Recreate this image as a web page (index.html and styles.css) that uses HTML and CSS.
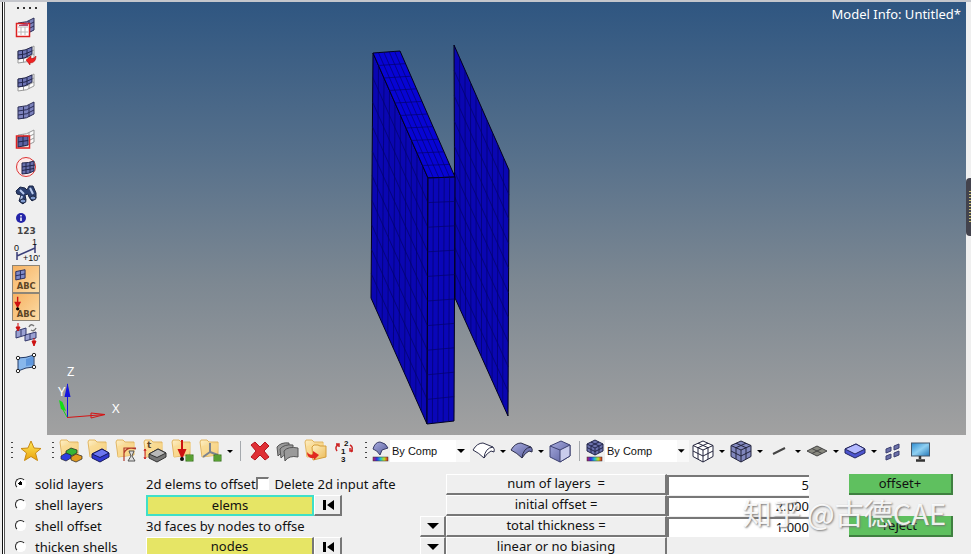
FILE: index.html
```
<!DOCTYPE html>
<html lang="en">
<head>
    <meta charset="UTF-8">
    <meta name="viewport" content="width=device-width, initial-scale=1.0">
    <title>Model Info: Untitled*</title>
    <link rel="stylesheet" href="styles.css">
</head>
<body>
    <!-- Shared icon parts -->
    <svg class="defs" aria-hidden="true">
        <defs>
            <linearGradient id="gold" x1="0" y1="0" x2="0" y2="1"><stop offset="0" stop-color="#ffe95a"/><stop offset="1" stop-color="#e9a20c"/></linearGradient>
            <linearGradient id="folderFill" x1="0" y1="0" x2="1" y2="1"><stop offset="0" stop-color="#fff0c4"/><stop offset="1" stop-color="#eab955"/></linearGradient>
            <linearGradient id="steel" x1="0" y1="0" x2="1" y2="1"><stop offset="0" stop-color="#a9addf"/><stop offset="1" stop-color="#555a9b"/></linearGradient>
            <linearGradient id="sky" x1="0" y1="0" x2="1" y2="1"><stop offset="0" stop-color="#2b8bd0"/><stop offset="0.5" stop-color="#8fd0f2"/><stop offset="1" stop-color="#2478b8"/></linearGradient>
            <linearGradient id="rainbow"><stop offset="0" stop-color="#c02060"/><stop offset="0.25" stop-color="#3030e0"/><stop offset="0.5" stop-color="#20c0d0"/><stop offset="0.75" stop-color="#c0e020"/><stop offset="1" stop-color="#e02020"/></linearGradient>
        </defs>
        <symbol id="mesh" viewBox="0 0 28 28">
            <path d="M6 10Q15 10 22 5V17Q15 22 6 22Z" fill="#7c82bd" stroke="#2a2d55"/>
            <path d="M6 14Q15 14 22 9M6 18Q15 18 22 13M11.500 9.500V21.500M17 8V20" fill="none" stroke="#2a2d55"/>
        </symbol>
        <symbol id="mesh-empty" viewBox="0 0 28 28">
            <path d="M6 10Q15 10 22 5V17Q15 22 6 22Z" fill="#fbfbfb" stroke="#999"/>
            <path d="M6 14Q15 14 22 9M6 18Q15 18 22 13M11.500 9.500V21.500M17 8V20" fill="none" stroke="#999"/>
        </symbol>
        <symbol id="mesh-part" viewBox="0 0 28 28">
            <use href="#mesh-empty"/>
            <path d="M6 10Q13 10 20 6V13Q13 18 6 18Z" fill="#6d74b4" stroke="#23264d"/>
            <path d="M6 14Q13 14 20 10M10.500 9.500V17.500M15 8.500V16.500" fill="none" stroke="#23264d"/>
        </symbol>
        <symbol id="folder" viewBox="0 0 28 28">
            <path d="M3 5L4 3H10L12 5H21V18L5 20Z" fill="url(#folderFill)" stroke="#e2b662"/>
            <path d="M5 9L22 6L20 18L5 20Z" fill="#fbdc93" opacity="0.700"/>
        </symbol>
        <symbol id="caret" viewBox="0 0 10 10">
            <path d="M2 4H8L5 7Z" fill="#000"/>
        </symbol>
        <symbol id="cube" viewBox="0 0 28 28">
            <path d="M4 8.500L14 4L24 8.500V19.500L14 25L4 19.500Z" stroke="#23243c"/>
            <path d="M4 8.500L14 13L24 8.500M14 13V25M9 6.200L19 10.700V22M19 6.200L9 10.700V22M4 14L14 19L24 14" fill="none" stroke="#23243c"/>
        </symbol>
        <symbol id="surface" viewBox="0 0 28 28">
            <path d="M3 13Q7 6 13 6L23 10Q25 12 24 15L21 14Q17 16 14 21Q9 16 3 13Z" stroke="#2c2e4a"/>
            <path d="M14 21Q15 11 23 10" fill="none" stroke="#2c2e4a"/>
        </symbol>
    </svg>

    <div class="app">
        <div class="workspace">
            <nav class="sidebar" aria-label="Display tools">
                <span class="grip-row"></span>
                <button class="tool" aria-label="Mask"><svg viewBox="0 0 28 28"><use href="#mesh"/><rect x="4.500" y="10.500" width="13" height="13" fill="#fff" stroke="#d22" stroke-width="1.500"/><path d="M9 14V22M13 14V22M6 14H16M6 19H16" stroke="#bbb"/><path d="M7 12L16 10V13H7Z" fill="#b04a72"/></svg></button>
                <button class="tool" aria-label="Reverse"><svg viewBox="0 0 28 28"><use href="#mesh-part"/><path d="M14 19L19 15V17.500Q22 18 24 15Q24 22 18 22V24Z" fill="#e22" stroke="#a00" stroke-width="0.500"/></svg></button>
                <button class="tool" aria-label="Unmask adjacent"><svg viewBox="0 0 28 28"><use href="#mesh-part"/></svg></button>
                <button class="tool" aria-label="Unmask all"><svg viewBox="0 0 28 28"><use href="#mesh"/></svg></button>
                <button class="tool" aria-label="Unmask shown"><svg viewBox="0 0 28 28"><use href="#mesh-empty"/><path d="M6 12L16 11V20L6 22Z" fill="#5b62a3" stroke="#23264d"/><path d="M11 12V21M6 17L16 15.500" stroke="#23264d"/><rect x="4.500" y="11" width="13" height="12" fill="none" stroke="#d22" stroke-width="1.500"/></svg></button>
                <button class="tool" aria-label="Spherical clipping"><svg viewBox="0 0 28 28"><circle cx="14" cy="14" r="9.500" fill="#fbeaea" stroke="#d33"/><path d="M10 10Q17 10 22 8V18Q17 21 10 21Z" fill="#686fac" stroke="#23264d"/><path d="M14 10V21M18 9V20M10 14L23 12M10 17.500L22 15.500" stroke="#23264d"/></svg></button>
                <button class="tool" aria-label="Find"><svg viewBox="0 0 28 28"><path d="M4 10L8 6L13 7L15 9L17 5L21 5L24 12L24 17L20 20L17 16L16 13L13 14L14 19L11 23L7 20L9 14L5 13Z" fill="#2c4070" stroke="#1a2545"/><path d="M8 9L12 13M18 7L21 13M10 15L9 19" stroke="#b9c9ec" stroke-width="2"/><ellipse cx="11" cy="20" rx="3" ry="2" fill="#7f9ace" stroke="#151f3c"/><ellipse cx="21" cy="17" rx="3" ry="2" fill="#7f9ace" stroke="#151f3c"/></svg></button>
                <button class="tool" aria-label="Numbers"><svg viewBox="0 0 28 28"><circle cx="9" cy="9" r="5" fill="#2424a8"/><path d="M9 6V7.500M9 8.500V12" stroke="#fff" stroke-width="1.500"/><text class="icon-text" x="5" y="25">123</text></svg></button>
                <button class="tool" aria-label="Scale"><svg viewBox="0 0 28 28"><path d="M5 19L23 11M5 15V23M23 7V16" stroke="#3a3e78" stroke-width="1.500"/><text class="icon-small" x="2" y="14">0</text><text class="icon-small" x="20" y="8">1</text><text class="icon-small" x="11" y="24">+10'</text></svg></button>
                <button class="tool active" aria-label="Element labels"><svg viewBox="0 0 28 28"><path d="M3 6L13 4V13L3 15Z" fill="#7e8ac8" stroke="#24285b"/><path d="M8 5V14M3 10.500L13 8.500" stroke="#24285b"/><text class="icon-abc" x="4" y="25">ABC</text></svg></button>
                <button class="tool active" aria-label="Load labels"><svg viewBox="0 0 28 28"><path d="M5 3V10M2.500 9H7.500L5 14Z" stroke="#c11" stroke-width="1.500" fill="#c11"/><circle cx="5" cy="16" r="1.800" fill="#000"/><text class="icon-abc" x="4" y="25">ABC</text></svg></button>
                <button class="tool" aria-label="Transfer"><svg viewBox="0 0 28 28"><path d="M4 10L14 7V14L4 17ZM13 14L24 11V17L13 20Z" fill="#9aa1d2" stroke="#33386b"/><path d="M9 9V15M18 13V19" stroke="#33386b"/><path d="M6 2V7M4 6H8L6 10ZM22 17V21M20 20H24L22 25Z" fill="#c11" stroke="#c11"/><path d="M17 6Q19 2 22 5M24 7Q22 11 19 9" fill="none" stroke="#777" stroke-width="1.500"/></svg></button>
                <button class="tool" aria-label="Surface edges"><svg viewBox="0 0 28 28"><path d="M6 9Q14 9 22 6V18Q14 18 6 22Z" fill="#88b7ec" stroke="#223a66"/><path d="M14 10Q18 9 21 7V16L14 17Z" fill="#5f97dd"/><g fill="#fff" stroke="#222"><circle cx="6" cy="9" r="1.700"/><circle cx="22" cy="6" r="1.700"/><circle cx="22" cy="18" r="1.700"/><circle cx="6" cy="22" r="1.700"/></g></svg></button>
            </nav>

            <main class="viewport">
                <p class="model-info">Model Info: Untitled*</p>
                <svg class="scene" viewBox="47 2 919 433" role="img" aria-label="Offset shell and solid mesh">
                    <g id="model"></g>
                    <g class="axes">
                        <path d="M67.500 417V384" stroke="#1414dd"/>
                        <path d="M67.500 383L64.500 397H70.500Z" fill="#1414dd"/>
                        <path d="M67 417L62 408" stroke="#18d818"/>
                        <path d="M59 400L62.500 402L66 411L61 409Z" fill="#14e014"/>
                        <path d="M67 417.500L105 414.500M91 413L105 414.500L91 418Z" fill="none" stroke="#d41414"/>
                        <text x="67" y="376">Z</text>
                        <text x="58" y="396">Y</text>
                        <text x="112" y="413">X</text>
                    </g>
                </svg>
            </main>
            <button class="side-tab" aria-label="Open side panel"></button>
        </div>

        <div class="toolbar">
            <span class="grip"></span>
            <button class="tool first" aria-label="Favorites"><svg viewBox="0 0 28 28"><path d="M14 4L17 11L24 11.500L18.500 16L20.500 23.500L14 19.500L7.500 23.500L9.500 16L4 11.500L11 11Z" fill="url(#gold)" stroke="#c98a12"/></svg></button>
            <span class="grip"></span>
            <div class="group">
                <button class="tool" aria-label="Assemblies"><svg viewBox="0 0 28 28"><use href="#folder"/><g stroke="#222" stroke-width="0.700"><path d="M9 14L14 11L20 13V16L14 19L9 17Z" fill="#35b535"/><path d="M4 19L9 16L14 18V21L9 24L4 22Z" fill="#2d3ee0"/><path d="M14 20L19 17L25 19V22L19 25L14 23Z" fill="#e09a20"/></g></svg></button>
                <button class="tool" aria-label="Components"><svg viewBox="0 0 28 28"><use href="#folder"/><path d="M7 17L17 12L24 16V20L15 25L7 21Z" fill="#3038d0" stroke="#16195c"/><path d="M7 17L17 12L24 16L15 20.500Z" fill="#6b75f0" stroke="#16195c"/></svg></button>
                <button class="tool" aria-label="Properties"><svg viewBox="0 0 28 28"><use href="#folder"/><path d="M11 24V11H23M11 16Q14 9 23 12" fill="none" stroke="#b23a2a" stroke-width="1.200"/><path d="M16 14H21L19 19L22 24H15L18 19Z" fill="#ddd" stroke="#555"/></svg></button>
                <button class="tool" aria-label="Thickness"><svg viewBox="0 0 28 28"><use href="#folder"/><path d="M8 17L17 12L25 16V20L16 25L8 21Z" fill="#777" stroke="#333"/><path d="M8 17L17 12L25 16L16 20.500Z" fill="#b9b9b9" stroke="#333"/><path d="M4 12V22M3 14L4 12L5 14M3 20L4 22L5 20" stroke="#c22" fill="none"/><text class="icon-abc" x="6" y="11">t</text></svg></button>
                <button class="tool" aria-label="Loads"><svg viewBox="0 0 28 28"><use href="#folder"/><path d="M13 3V14M10 13H16L13 20Z" fill="#c11" stroke="#c11" stroke-width="2"/><circle cx="13" cy="22" r="2" fill="#111"/><rect x="17" y="18" width="7" height="6" fill="#7ccc4c" stroke="#34731b"/><path d="M18 20H23M18 22H23" stroke="#34731b"/></svg></button>
                <button class="tool" aria-label="Systems"><svg viewBox="0 0 28 28"><use href="#folder"/><path d="M13 6V16M13 15L6 20M13 15L21 18" stroke="#7d8490" stroke-width="2"/><rect x="17" y="18" width="7" height="6" fill="#7ccc4c" stroke="#34731b"/><path d="M18 20H23M18 22H23" stroke="#34731b"/></svg></button>
                <button class="drop" aria-label="More collectors"><svg viewBox="0 0 10 10"><use href="#caret"/></svg></button>
            </div>
            <span class="divider"></span>
            <div class="group">
                <button class="tool" aria-label="Delete"><svg viewBox="0 0 28 28"><path d="M5 8L9 5L14 10L19 5L23 9L18 14L23 20L19 23L14 18L9 23L5 20L10 14Z" fill="#df2f35" stroke="#b4151e"/></svg></button>
                <button class="tool" aria-label="Card edit"><svg viewBox="0 0 28 28"><g fill="#9a9a9a" stroke="#555"><path d="M3 10Q7 5 15 6V15Q8 14 4 19Z"/><path d="M6 12Q10 7 19 8V17Q11 16 7 21Z"/><path d="M10 14Q14 9 24 11V20Q15 18 11 24Z"/></g></svg></button>
                <button class="tool" aria-label="Organize"><svg viewBox="0 0 28 28"><use href="#folder"/><path d="M10 10L12 8H16L18 9H24V20L11 23Z" fill="url(#folderFill)" stroke="#d49d3a"/><path d="M5 15Q8 19 11 17V14L17 18L12 23V21Q5 22 5 15Z" fill="#e12a20"/></svg></button>
                <button class="tool" aria-label="Renumber"><svg viewBox="0 0 28 28"><text class="icon-num" x="14" y="9">2</text><text class="icon-num" x="11" y="17">1</text><text class="icon-num" x="11" y="25">3</text><path d="M7 14Q4 10 9 7M6 7H9V10M20 8Q24 10 21 15M23 14H20V11" fill="none" stroke="#c22" stroke-width="1.500"/></svg></button>
            </div>
            <span class="grip combo-grip"></span>
            <div class="combo">
                <svg class="combo-icon" viewBox="0 0 20 28"><path d="M3 12Q5 5 10 5Q16 6 18 11L12 13L10 18Q7 13 3 12Z" fill="url(#steel)" stroke="#383b66"/><rect x="3" y="20" width="15" height="4" fill="url(#rainbow)" stroke="#333" stroke-width="0.500"/></svg>
                <select aria-label="Geometry color mode"><option>By Comp</option></select>
                <svg class="combo-caret" viewBox="0 0 14 22"><path d="M1 9H9L5 13Z"/></svg>
            </div>
            <div class="group">
                <button class="tool" aria-label="Wireframe geometry"><svg viewBox="0 0 28 28"><use href="#surface" fill="#fff"/></svg></button>
                <button class="drop" aria-label="Wireframe options"><svg viewBox="0 0 10 10"><use href="#caret"/></svg></button>
                <button class="tool" aria-label="Shaded geometry"><svg viewBox="0 0 28 28"><use href="#surface" fill="url(#steel)"/></svg></button>
                <button class="drop" aria-label="Shading options"><svg viewBox="0 0 10 10"><use href="#caret"/></svg></button>
                <button class="tool" aria-label="Transparency"><svg viewBox="0 0 28 28"><path d="M4 9L15 4L24 8V19L14 25L4 20Z" fill="url(#steel)" stroke="#3d4170"/><path d="M14 13L24 8V19L14 25Z" fill="#c9ccec" stroke="#3d4170"/><path d="M4 9L14 13" stroke="#3d4170"/></svg></button>
            </div>
            <span class="divider"></span>
            <div class="combo wide">
                <svg class="combo-icon" viewBox="0 0 20 28"><path d="M2 7L10 3L18 7V14L10 18L2 14Z" fill="#6a70ab" stroke="#23264a"/><path d="M2 7L10 11L18 7M10 11V18M6 5L14 9V16M14 5L6 9V16M2 10.500L10 14.500L18 10.500" fill="none" stroke="#23264a"/><rect x="2" y="20" width="15" height="4" fill="url(#rainbow)" stroke="#333" stroke-width="0.500"/></svg>
                <select aria-label="Element color mode"><option>By Comp</option></select>
                <svg class="combo-caret" viewBox="0 0 14 22"><path d="M1 9H9L5 13Z"/></svg>
            </div>
            <div class="group">
                <button class="tool" aria-label="Wireframe elements"><svg viewBox="0 0 28 28"><use href="#cube" fill="#fff"/></svg></button>
                <button class="drop" aria-label="Wireframe element options"><svg viewBox="0 0 10 10"><use href="#caret"/></svg></button>
                <button class="tool" aria-label="Shaded elements"><svg viewBox="0 0 28 28"><use href="#cube" fill="#8187bd"/></svg></button>
                <button class="drop" aria-label="Shaded element options"><svg viewBox="0 0 10 10"><use href="#caret"/></svg></button>
                <button class="tool" aria-label="1D elements"><svg viewBox="0 0 28 28"><path d="M8 17L20 11" stroke="#444" stroke-width="2"/></svg></button>
                <button class="drop" aria-label="1D options"><svg viewBox="0 0 10 10"><use href="#caret"/></svg></button>
                <button class="tool" aria-label="2D elements"><svg viewBox="0 0 28 28"><path d="M4 14L14 9L24 14L14 19Z" fill="#88887f" stroke="#444"/><path d="M9 11.500L19 16.500M19 11.500L9 16.500" stroke="#444"/></svg></button>
                <button class="drop" aria-label="2D options"><svg viewBox="0 0 10 10"><use href="#caret"/></svg></button>
                <button class="tool" aria-label="3D elements"><svg viewBox="0 0 28 28"><path d="M4 12L15 7L24 12V16L14 21L4 16Z" fill="#4d55cf" stroke="#23255d"/><path d="M4 12L15 7L24 12L14 17Z" fill="#b3b9ff" stroke="#23255d"/></svg></button>
                <button class="drop" aria-label="3D options"><svg viewBox="0 0 10 10"><use href="#caret"/></svg></button>
                <button class="tool" aria-label="Shrink elements"><svg viewBox="0 0 28 28"><g fill="#6a6fa8" stroke="#3b3f70"><path d="M15 9L20 7V11L15 13ZM15 16L20 14V18L15 20ZM7 12L12 10V14L7 16ZM7 19L12 17V21L7 23Z"/></g></svg></button>
                <button class="tool" aria-label="Screen"><svg viewBox="0 0 28 28"><rect x="4.500" y="6" width="18" height="13" fill="url(#sky)" stroke="#47596c"/><path d="M13 19V22M9 23.500H18" stroke="#333" stroke-width="2.500"/></svg></button>
            </div>
        </div>

        <form class="panel">
            <div class="col modes">
                <label class="row"><input type="radio" name="mode" checked>solid layers</label>
                <label class="row"><input type="radio" name="mode">shell layers</label>
                <label class="row"><input type="radio" name="mode">shell offset</label>
                <label class="row"><input type="radio" name="mode">thicken shells</label>
            </div>
            <div class="col select-col">
                <div class="row">
                    <span class="caption">2d elems to offset</span>
                    <label class="check"><input type="checkbox">Delete 2d input afte</label>
                </div>
                <div class="row">
                    <button type="button" class="collector current">elems</button>
                    <button type="button" class="reset" aria-label="Reset elems"><svg viewBox="0 0 16 14"><path d="M3 2H6V12H3ZM14 2V12L7 7Z"/></svg></button>
                </div>
                <div class="row"><span>3d faces by nodes to offse</span></div>
                <div class="row">
                    <button type="button" class="collector">nodes</button>
                    <button type="button" class="reset" aria-label="Reset nodes"><svg viewBox="0 0 16 14"><path d="M3 2H6V12H3ZM14 2V12L7 7Z"/></svg></button>
                </div>
            </div>
            <div class="col">
                <div class="row">
                    <span class="switch-space"></span>
                    <label class="field" for="layers">num of layers&nbsp; =</label>
                </div>
                <div class="row">
                    <span class="switch-space"></span>
                    <label class="field" for="initial">initial offset =</label>
                </div>
                <div class="row">
                    <button type="button" class="switch" aria-label="Switch thickness type"><svg viewBox="0 0 12 8"><path d="M0 1H12L6 7Z"/></svg></button>
                    <label class="field" for="thickness">total thickness =</label>
                </div>
                <div class="row">
                    <button type="button" class="switch" aria-label="Switch biasing"><svg viewBox="0 0 12 8"><path d="M0 1H12L6 7Z"/></svg></button>
                    <button type="button" class="field">linear or no biasing</button>
                </div>
            </div>
            <div class="col">
                <div class="row"><input class="value" id="layers" type="text" value="5"></div>
                <div class="row"><input class="value" id="initial" type="text" value="2.000"></div>
                <div class="row"><input class="value" id="thickness" type="text" value="1.000"></div>
            </div>
            <div class="col actions">
                <div class="row"><button type="button" class="action">offset+</button></div>
                <div class="row"></div>
                <div class="row"><button type="button" class="action">reject</button></div>
            </div>
        </form>
        <div class="watermark">知乎 @古德CAE</div>
    </div>

    <script>
        // Corners go round each face; u and v are the number of elements along its sides
        const faces = [
            { points: [[454, 45], [509, 170], [508, 416], [455, 298]], u: 10, v: 10, fill: '#0a06b2' },
            { points: [[373, 53], [428, 178], [427, 424], [371, 298]], u: 10, v: 10, fill: '#0a06b2' },
            { points: [[373, 53], [400, 51], [455, 177], [428, 178]], u: 5, v: 10, fill: '#0704d4' },
            { points: [[428, 178], [455, 177], [454, 421], [427, 424]], u: 5, v: 10, fill: '#0a06b8' }
        ];
        const model = document.getElementById('model');

        function mix(a, b, t) {
            return [a[0] + (b[0] - a[0]) * t, a[1] + (b[1] - a[1]) * t];
        }

        function addPath(d, name, fill) {
            const path = document.createElementNS('http://www.w3.org/2000/svg', 'path');
            path.setAttribute('d', d);
            path.setAttribute('class', name);
            if (fill) path.setAttribute('fill', fill);
            model.appendChild(path);
        }

        faces.forEach(({ points: [a, b, c, d], u, v, fill }) => {
            let lines = '';
            for (let i = 1; i < u; i++) {
                lines += `M${mix(a, b, i / u)}L${mix(d, c, i / u)}`;
            }
            for (let i = 1; i < v; i++) {
                lines += `M${mix(a, d, i / v)}L${mix(b, c, i / v)}`;
            }
            addPath(`M${a}L${b}L${c}L${d}Z`, 'face', fill);
            addPath(lines, 'mesh-line');
        });
    </script>
</body>
</html>
```
FILE: styles.css
```
* {
    margin: 0;
    padding: 0;
    box-sizing: border-box;
}

body {
    background-color: #efefef;
    color: #111;
    font-family: "Noto Sans", "Noto Sans CJK SC", sans-serif;
    font-size: 13px;
    line-height: 18px;
    overflow: hidden;
}

button,
input,
select {
    font: inherit;
    color: inherit;
    border: none;
    border-radius: 0;
    background: none;
}

.defs {
    position: absolute;
    width: 0;
    height: 0;
}

.app {
    position: relative;
    display: flex;
    flex-direction: column;
    height: 100vh;
    padding-left: 5px;
    border-top: 2px solid #c4c6cc;
    background: linear-gradient(90deg, #efefef 2px, #111 2px 3px, #fff 3px 4px, #555 4px 5px, transparent 5px);
}

/* Viewport and left tools */
.workspace {
    position: relative;
    display: flex;
    flex: 1;
    min-height: 0;
    padding-right: 5px;
}

.sidebar {
    display: flex;
    flex-direction: column;
    align-items: center;
    width: 42px;
    overflow: hidden;
}

.grip-row {
    flex: none;
    width: 22px;
    height: 11px;
    background: radial-gradient(circle, #333 1px, transparent 1px) 0 3px / 6px 6px repeat-x;
}

.tool {
    flex: none;
    width: 28px;
    height: 28px;
}

.tool svg {
    display: block;
    width: 100%;
    height: 100%;
}

.tool.active {
    border: 1px solid #8d8577;
    background: linear-gradient(135deg, #f6b263, #fcdca6);
}

.icon-text,
.icon-abc {
    font: bold 9px "DejaVu Sans", sans-serif;
    fill: #444;
}

.icon-abc {
    fill: #5d4526;
}

.icon-small,
.icon-num {
    font: 9px "Liberation Sans", sans-serif;
    fill: #111;
}

.icon-num {
    font-size: 8px;
    font-weight: bold;
}

.viewport {
    position: relative;
    flex: 1;
    min-width: 0;
    background: linear-gradient(#2f5681, #56708b 35%, #7d8892 65%, #a1a1a1);
}

.scene {
    display: block;
    width: 100%;
    height: 100%;
}

.model-info {
    position: absolute;
    top: 3px;
    right: 5px;
    color: #fff;
}

.face {
    stroke: #02021c;
}

.mesh-line {
    fill: none;
    stroke: #03036a;
    stroke-width: 0.7px;
}

.axes text {
    fill: #fff;
    font-size: 13px;
}

.side-tab {
    position: absolute;
    right: 0;
    top: 176px;
    width: 5px;
    height: 58px;
    border-radius: 4px 0 0 4px;
    background: repeating-linear-gradient(#c8c070 0 1px, #43434d 1px 3px) right / 2px 32px no-repeat, #43434d;
}

/* Icon toolbar */
.toolbar {
    display: flex;
    flex: none;
    align-items: center;
    height: 35px;
    padding: 0 0 3px 5px;
}

.group {
    display: flex;
    align-items: center;
}

.grip {
    flex: none;
    width: 4px;
    height: 22px;
    background: radial-gradient(circle, #444 1px, transparent 1px) 0 0 / 4px 5px repeat-y;
}

.first {
    margin: 0 6px 0 3px;
}

.toolbar .grip + .group {
    margin-left: 2px;
}

.drop {
    flex: none;
    width: 10px;
    height: 28px;
}

.drop svg {
    display: block;
    width: 10px;
    height: 10px;
}

.divider {
    flex: none;
    width: 1px;
    height: 20px;
    margin: 0 5px;
    background-color: #a5a9ad;
}

.combo-grip {
    margin-left: 6px;
}

.combo {
    display: flex;
    align-items: center;
    margin-left: 2px;
}

.combo-icon {
    width: 20px;
    height: 28px;
}

.combo select {
    width: 66px;
    height: 22px;
    padding-left: 2px;
    appearance: none;
    background-color: #fff;
    font: 11px "Liberation Sans", sans-serif;
}

.wide {
    margin-left: 0;
}

.wide select {
    width: 72px;
}

.combo-caret {
    width: 14px;
    height: 22px;
    background-color: #f8f8f8;
}

.wide .combo-caret {
    width: 12px;
}

/* Bottom panel */
.panel {
    display: grid;
    flex: none;
    grid-template-columns: 141fr 274fr 247fr 142fr 162fr;
    height: 84px;
    padding-top: 4px;
    line-height: 16px;
    overflow: hidden;
}

.row {
    display: flex;
    align-items: center;
    height: 21px;
    white-space: nowrap;
}

.modes {
    padding-left: 10px;
}

.modes .row,
.row span {
    padding-bottom: 2px;
}

.modes input {
    width: 11px;
    height: 11px;
    margin-right: 9px;
    appearance: none;
    border: 1px solid #fff;
    border-top-color: #222;
    border-left-color: #222;
    border-radius: 50%;
    background-color: #fff;
}

.modes input:checked {
    background: radial-gradient(circle, #000 2px, #fff 2px);
}

.check {
    display: flex;
    align-items: center;
    gap: 6px;
    padding-bottom: 2px;
}

.check input {
    width: 13px;
    height: 13px;
    appearance: none;
    border: 1px solid #fff;
    border-top: 2px solid #777;
    border-left: 2px solid #777;
    background-color: #fff;
}

.collector,
.reset,
.switch,
.field {
    height: 21px;
    border: 1px solid #fff;
    border-right: 2px solid #777;
    border-bottom: 2px solid #777;
    background-color: #efefef;
    text-align: center;
}

.collector {
    flex: 0 1 168px;
    padding-bottom: 2px;
    background-color: #e6e565;
}

.current {
    border: 2px solid #3fe0c8;
}

.reset {
    width: 28px;
}

.reset svg {
    display: block;
    width: 16px;
    height: 14px;
    margin: 0 auto;
}

.switch,
.switch-space {
    flex: none;
    width: 26px;
}

.switch svg {
    display: block;
    width: 12px;
    height: 8px;
    margin: 0 auto;
}

.field {
    flex: 1;
    padding-bottom: 2px;
}

.value {
    width: 100%;
    height: 20px;
    padding-bottom: 2px;
    border-top: 2px solid #777;
    border-left: 2px solid #777;
    background-color: #fff;
    text-align: right;
}

.actions {
    padding: 0 18px 0 40px;
}

.action {
    width: 100%;
    height: 21px;
    padding-bottom: 1px;
    border-right: 2px solid #3f8040;
    border-bottom: 2px solid #3f8040;
    background-color: #5fc05f;
}

.watermark {
    position: absolute;
    right: 25px;
    bottom: 21px;
    color: rgba(255, 255, 255, 0.9);
    font: 29px/42px "Noto Sans CJK SC", sans-serif;
    text-shadow: 1px 1px 2px #777;
    pointer-events: none;
}
```
